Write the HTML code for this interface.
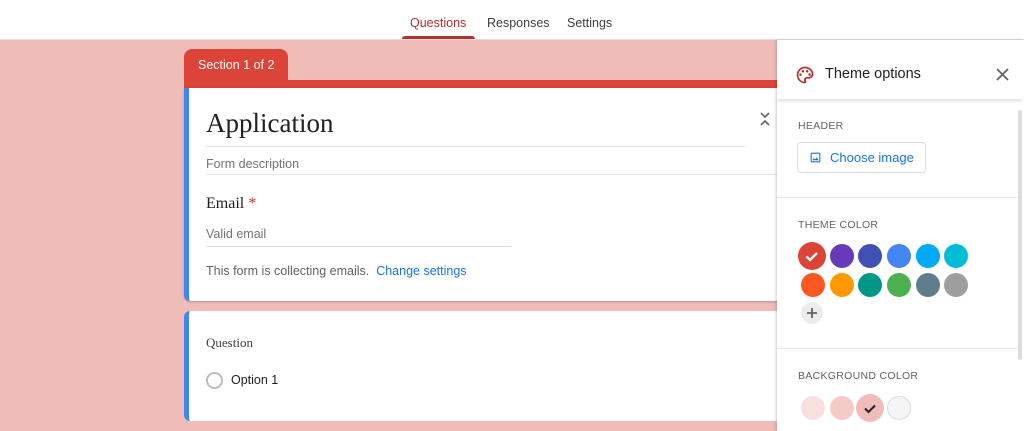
<!DOCTYPE html>
<html><head><style>
*{margin:0;padding:0;box-sizing:border-box}
body{width:1024px;height:431px;overflow:hidden;background:#f0bcb8;font-family:"Liberation Sans",sans-serif;position:relative}
.top{position:absolute;left:0;top:0;width:1024px;height:40px;background:#fff;border-bottom:1px solid #e8e0df}
.tab{position:absolute;top:16px;font-size:12.5px;color:#3c4043}
.abs{position:absolute}
.serif{font-family:"Liberation Serif",serif}
.c{position:absolute;border-radius:50%;width:24px;height:24px}
.lbl{position:absolute;left:798px;font-size:10.5px;color:#5f6368;letter-spacing:.3px}
</style></head><body>
<div class="top">
<div class="tab" style="left:410px;color:#b3322b">Questions</div>
<div class="abs" style="left:402px;top:36px;width:73px;height:3px;background:#b3322b;border-radius:3px 3px 0 0"></div>
<div class="tab" style="left:487px">Responses</div>
<div class="tab" style="left:567px">Settings</div>
</div>
<div class="abs" style="left:184px;top:49px;width:104px;height:35px;background:#db4437;border-radius:8px 8px 0 0;color:#fff;font-size:12.5px;padding:9px 0 0 14px">Section 1 of 2</div>
<div class="abs" style="left:184px;top:80px;width:594px;height:8px;background:#db4437"></div>
<div class="abs" style="left:184px;top:88px;width:594px;height:213px;background:#fff;border-left:5px solid #4285f4;border-radius:0 0 0 6px;box-shadow:0 1px 2px rgba(0,0,0,.25)"></div>
<div class="abs serif" style="left:206px;top:108px;font-size:27px;color:#202124">Application</div>
<div class="abs" style="left:206px;top:146px;width:539px;height:1px;background:#e0e0e0"></div>
<svg class="abs" style="left:759px;top:111px" width="12" height="16" viewBox="0 0 12 16"><path d="M2 2l4 4 4-4M2 14l4-4 4 4" fill="none" stroke="#5f6368" stroke-width="1.6"/></svg>
<div class="abs" style="left:206px;top:157px;font-size:12.5px;color:#70757a">Form description</div>
<div class="abs" style="left:206px;top:174px;width:572px;height:1px;background:#e8e8e8"></div>
<div class="abs serif" style="left:206px;top:195px;font-size:16px;color:#202124">Email <span style="color:#d93025">*</span></div>
<div class="abs" style="left:206px;top:227px;font-size:12.5px;color:#70757a">Valid email</div>
<div class="abs" style="left:206px;top:246px;width:305px;height:1px;background:#dadce0"></div>
<div class="abs" style="left:206px;top:264px;font-size:12.5px;color:#5f6368">This form is collecting emails. &nbsp;<span style="color:#1a73e8">Change settings</span></div>
<div class="abs" style="left:184px;top:311px;width:594px;height:110px;background:#fff;border-left:5px solid #4285f4;border-radius:6px 0 0 6px"></div>
<div class="abs serif" style="left:206px;top:335px;font-size:13px;color:#3c4043">Question</div>
<div class="abs" style="left:206px;top:372px;width:17px;height:17px;border:2px solid #bdbdbd;border-radius:50%"></div>
<div class="abs" style="left:231px;top:373px;font-size:12.5px;color:#202124">Option 1</div>

<div class="abs" style="left:777px;top:40px;width:247px;height:391px;background:#fff;box-shadow:-1px 0 3px rgba(0,0,0,.2)"></div>
<div class="abs" style="left:777px;top:96px;width:245px;height:3px;box-shadow:0 2px 3px rgba(0,0,0,.15)"></div>
<div class="abs" style="left:1018px;top:110px;width:4px;height:250px;background:#dadce0;border-radius:2px"></div>
<svg class="abs" style="left:795px;top:65px" width="20" height="20" viewBox="0 0 24 24"><path fill="#b3322b" d="M12 2C6.5 2 2 6.5 2 12s4.5 10 10 10c.9 0 1.7-.8 1.7-1.7 0-.4-.2-.8-.4-1.1-.3-.3-.4-.7-.4-1.1 0-.9.8-1.7 1.700-1.7h2c3.1 0 5.6-2.5 5.6-5.6C22 6 17.5 2 12 2zm0 2c4.4 0 8 3.1 8 6.8 0 2-1.6 3.6-3.6 3.6h-2c-2 0-3.7 1.6-3.7 3.7 0 .8.3 1.5.7 2.1C7.6 19.8 4 16.3 4 12c0-4.4 3.6-8 8-8z"/><circle fill="#b3322b" cx="6.5" cy="11.5" r="1.5"/><circle fill="#b3322b" cx="9.5" cy="7.5" r="1.5"/><circle fill="#b3322b" cx="14.5" cy="7.5" r="1.5"/><circle fill="#b3322b" cx="17.5" cy="11.5" r="1.5"/></svg>
<div class="abs" style="left:825px;top:66px;font-size:14.5px;color:#202124">Theme options</div>
<svg class="abs" style="left:996px;top:68px" width="13" height="13" viewBox="0 0 13 13"><path d="M1 1l11 11M12 1L1 12" stroke="#5f6368" stroke-width="1.8"/></svg>
<div class="lbl" style="top:120px">HEADER</div>
<div class="abs" style="left:797px;top:142px;width:129px;height:31px;border:1px solid #dadce0;border-radius:4px"></div>
<svg class="abs" style="left:809px;top:151px" width="13" height="13" viewBox="0 0 24 24"><path fill="#1a73e8" d="M19 3H5a2 2 0 0 0-2 2v14a2 2 0 0 0 2 2h14a2 2 0 0 0 2-2V5a2 2 0 0 0-2-2zm0 16H5V5h14v14zm-5-7l-3 3.7L9 13l-3 4h12l-4-5z"/></svg>
<div class="abs" style="left:830px;top:150px;font-size:13px;color:#1a73e8">Choose image</div>
<div class="abs" style="left:777px;top:197px;width:240px;height:1px;background:#e8e8e8"></div>
<div class="lbl" style="top:219px">THEME COLOR</div>
<div class="c" style="left:798px;top:242px;width:28px;height:28px;background:#db4437"><svg width="28" height="28"><path d="M8.5 14.5l3.5 3.5 7-7" fill="none" stroke="#fff" stroke-width="2.4"/></svg></div>
<div class="c" style="left:830px;top:244px;background:#673ab7"></div>
<div class="c" style="left:858px;top:244px;background:#3f51b5"></div>
<div class="c" style="left:887px;top:244px;background:#4285f4"></div>
<div class="c" style="left:916px;top:244px;background:#03a9f4"></div>
<div class="c" style="left:944px;top:244px;background:#00bcd4"></div>
<div class="c" style="left:801px;top:273px;background:#ff5722"></div>
<div class="c" style="left:830px;top:273px;background:#ff9800"></div>
<div class="c" style="left:858px;top:273px;background:#009688"></div>
<div class="c" style="left:887px;top:273px;background:#4caf50"></div>
<div class="c" style="left:916px;top:273px;background:#607d8b"></div>
<div class="c" style="left:944px;top:273px;background:#9e9e9e"></div>
<div class="c" style="left:801px;top:302px;width:22px;height:22px;background:#ececec"><svg width="22" height="22"><path d="M11 6v10M6 11h10" stroke="#5f6368" stroke-width="1.8"/></svg></div>
<div class="abs" style="left:777px;top:348px;width:240px;height:1px;background:#e8e8e8"></div>
<div class="lbl" style="top:370px">BACKGROUND COLOR</div>
<div class="c" style="left:801px;top:396px;background:#f9e0df"></div>
<div class="c" style="left:830px;top:396px;background:#f5cbc7"></div>
<div class="c" style="left:856px;top:394px;width:28px;height:28px;background:#f0bcb8"><svg width="28" height="28"><path d="M9 14.5l3.5 3.5 6.5-6.5" fill="none" stroke="#202124" stroke-width="2"/></svg></div>
<div class="c" style="left:887px;top:396px;background:#f5f5f5;border:1px solid #dadce0"></div>
</body></html>
